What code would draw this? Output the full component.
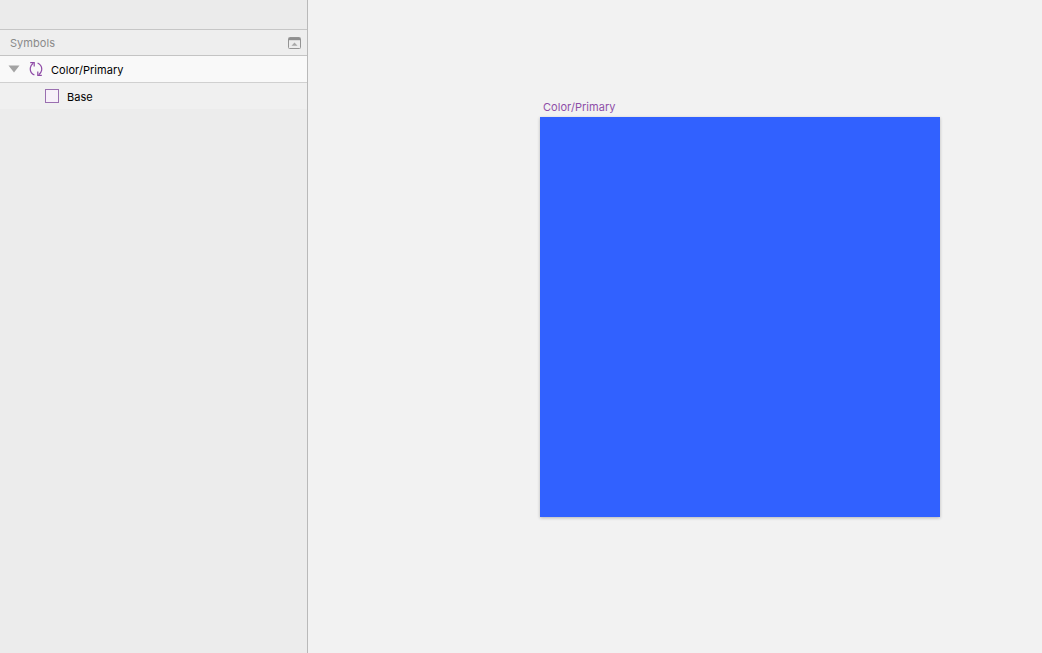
<script>
</script>

<div class="app">
  <aside class="sidebar">
    <div class="top"></div>
    <div class="section">
      <span class="section-title">Symbols</span>
      <svg class="collapse" width="13" height="12" viewBox="0 0 13 12" aria-hidden="true">
        <rect x="0.5" y="0.5" width="12" height="11" rx="1" fill="#ececec" stroke="#949494"/>
        <rect x="1" y="1" width="11" height="2.2" fill="#8f8f8f"/>
        <path d="M6.5 5.4 L9.5 8.8 H3.5 Z" fill="#a8a8a8"/>
      </svg>
    </div>
    <div class="row symbol">
      <svg class="caret" width="12" height="8" viewBox="0 0 12 8" aria-hidden="true">
        <path d="M0.5 0.5 H11.5 L6 7.5 Z" fill="#a3a3a3"/>
      </svg>
      <svg class="sync" width="14" height="16" viewBox="0 0 14 16" aria-hidden="true">
        <path d="M5.4 14 C2.2 12.5 0.9 9.5 1.4 6.6 C1.8 4.6 2.9 3.2 4.2 2.2" fill="none" stroke="#8e4aa6" stroke-width="1.2"/>
        <path d="M1.2 1.6 H5.2 V5.4" fill="none" stroke="#8e4aa6" stroke-width="1.2"/>
        <path d="M8.6 2 C11.8 3.5 13.1 6.5 12.6 9.4 C12.2 11.4 11.1 12.8 9.8 13.8" fill="none" stroke="#8e4aa6" stroke-width="1.2"/>
        <path d="M12.8 14.4 H8.8 V10.6" fill="none" stroke="#8e4aa6" stroke-width="1.2"/>
      </svg>
      <span class="label">Color/Primary</span>
    </div>
    <div class="row layer">
      <span class="swatch"></span>
      <span class="label">Base</span>
    </div>
  </aside>
  <main class="canvas">
    <div class="artboard">
      <div class="artboard-title">Color/Primary</div>
      <div class="fill"></div>
    </div>
  </main>
</div>

<style>
  :global(body) {
    margin: 0;
    background: #f2f2f2;
  }
  .app {
    display: flex;
    width: 1042px;
    height: 653px;
    overflow: hidden;
    font-family: "Inter", "Liberation Sans", sans-serif;
  }
  .sidebar {
    flex: none;
    box-sizing: border-box;
    width: 308px;
    height: 653px;
    background: #ececec;
    border-right: 1px solid #b9b9b9;
    display: flex;
    flex-direction: column;
  }
  .top {
    box-sizing: border-box;
    height: 30px;
    background: #ebebeb;
    border-bottom: 1px solid #c6c6c6;
  }
  .section {
    box-sizing: border-box;
    height: 26px;
    padding: 0 6px 0 10px;
    display: flex;
    align-items: center;
    justify-content: space-between;
    background: #eeeeee;
    border-bottom: 1px solid #c4c4c4;
  }
  .section-title {
    font-size: 11px;
    letter-spacing: 0.05px;
    color: #8a8a8a;
  }
  .row {
    box-sizing: border-box;
    display: flex;
    align-items: center;
    font-size: 11px;
    letter-spacing: 0.05px;
    color: #000;
  }
  .label {
    position: relative;
    top: 1px;
  }
  .symbol {
    height: 27px;
    padding-left: 8px;
    background: #f9f9f9;
    border-bottom: 1px solid #d0d0d0;
  }
  .sync {
    margin-left: 9px;
    margin-right: 8px;
  }
  .layer {
    height: 26px;
    padding-left: 45px;
    background: #f0f0f0;
  }
  .swatch {
    box-sizing: border-box;
    width: 14px;
    height: 14px;
    border: 1px solid #9a6fb0;
    background: #f7f0f9;
    margin-right: 8px;
  }
  .canvas {
    flex: 1;
    background: #f2f2f2;
    padding: 100px 0 0 232px;
  }
  .artboard {
    width: 400px;
  }
  .artboard-title {
    height: 17px;
    line-height: 15px;
    padding-left: 3px;
    font-size: 11px;
    letter-spacing: 0.05px;
    color: #8f4fa8;
  }
  .fill {
    width: 400px;
    height: 400px;
    background: #3161ff;
    box-shadow: 0 1px 3px rgba(0, 0, 0, 0.25);
  }
</style>
